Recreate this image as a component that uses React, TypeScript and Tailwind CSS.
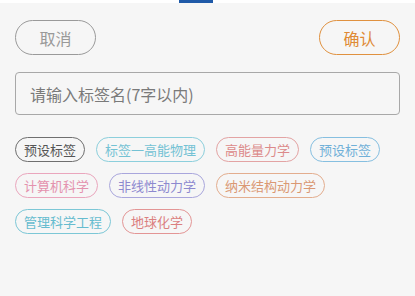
import React from 'react';

const tags = [
  { name: '预设标签', cls: 'border-[#6f6f6f] text-[#555555]' },
  { name: '标签一高能物理', cls: 'border-[#8ccfdc] text-[#74c2d4]' },
  { name: '高能量力学', cls: 'border-[#e3a3a3] text-[#dc8a8a]' },
  { name: '预设标签', cls: 'border-[#86bfe0] text-[#70b0d8]' },
  { name: '计算机科学', cls: 'border-[#eaa6bd] text-[#e492ae]' },
  { name: '非线性动力学', cls: 'border-[#a9a6dc] text-[#8d89cf]' },
  { name: '纳米结构动力学', cls: 'border-[#e3ad8e] text-[#da9873]' },
  { name: '管理科学工程', cls: 'border-[#7cc7d6] text-[#66bccf]' },
  { name: '地球化学', cls: 'border-[#e39595] text-[#db7f7f]' },
];

export default function App() {
  return (
    <div
      className="w-[415px] h-[296px] bg-[#f6f6f6] overflow-hidden"
      style={{ fontFamily: '"Noto Sans CJK SC", "Noto Sans", sans-serif' }}
    >
      {/* top strip */}
      <div className="h-[3px] bg-white flex">
        <div className="ml-[179px] w-[34px] h-[3px] bg-[#1f5aa8]"></div>
      </div>

      <div className="px-[15px]">
        {/* buttons */}
        <div className="mt-[17px] flex items-center justify-between">
          <button className="w-[81px] h-[35px] rounded-full border border-[#9a9a9a] text-[16px] text-[#999999] flex items-center justify-center">
            取消
          </button>
          <button className="w-[81px] h-[35px] rounded-full border border-[#e0913f] text-[16px] text-[#df8a35] flex items-center justify-center">
            确认
          </button>
        </div>

        {/* input */}
        <div className="mt-[17px] h-[43px] rounded-[4px] border border-[#a8a8a8] bg-[#f6f6f6] flex items-center px-[14px]">
          <span className="text-[16px] text-[#7a7a7a]">请输入标签名(7字以内)</span>
        </div>

        {/* tags */}
        <div className="mt-[22px] flex flex-wrap gap-x-[11px] gap-y-[11px]">
          {tags.map((t, i) => (
            <span
              key={i}
              className={`h-[25px] px-[8px] rounded-full border text-[13px] leading-none flex items-center ${t.cls}`}
            >
              {t.name}
            </span>
          ))}
        </div>
      </div>
    </div>
  );
}
